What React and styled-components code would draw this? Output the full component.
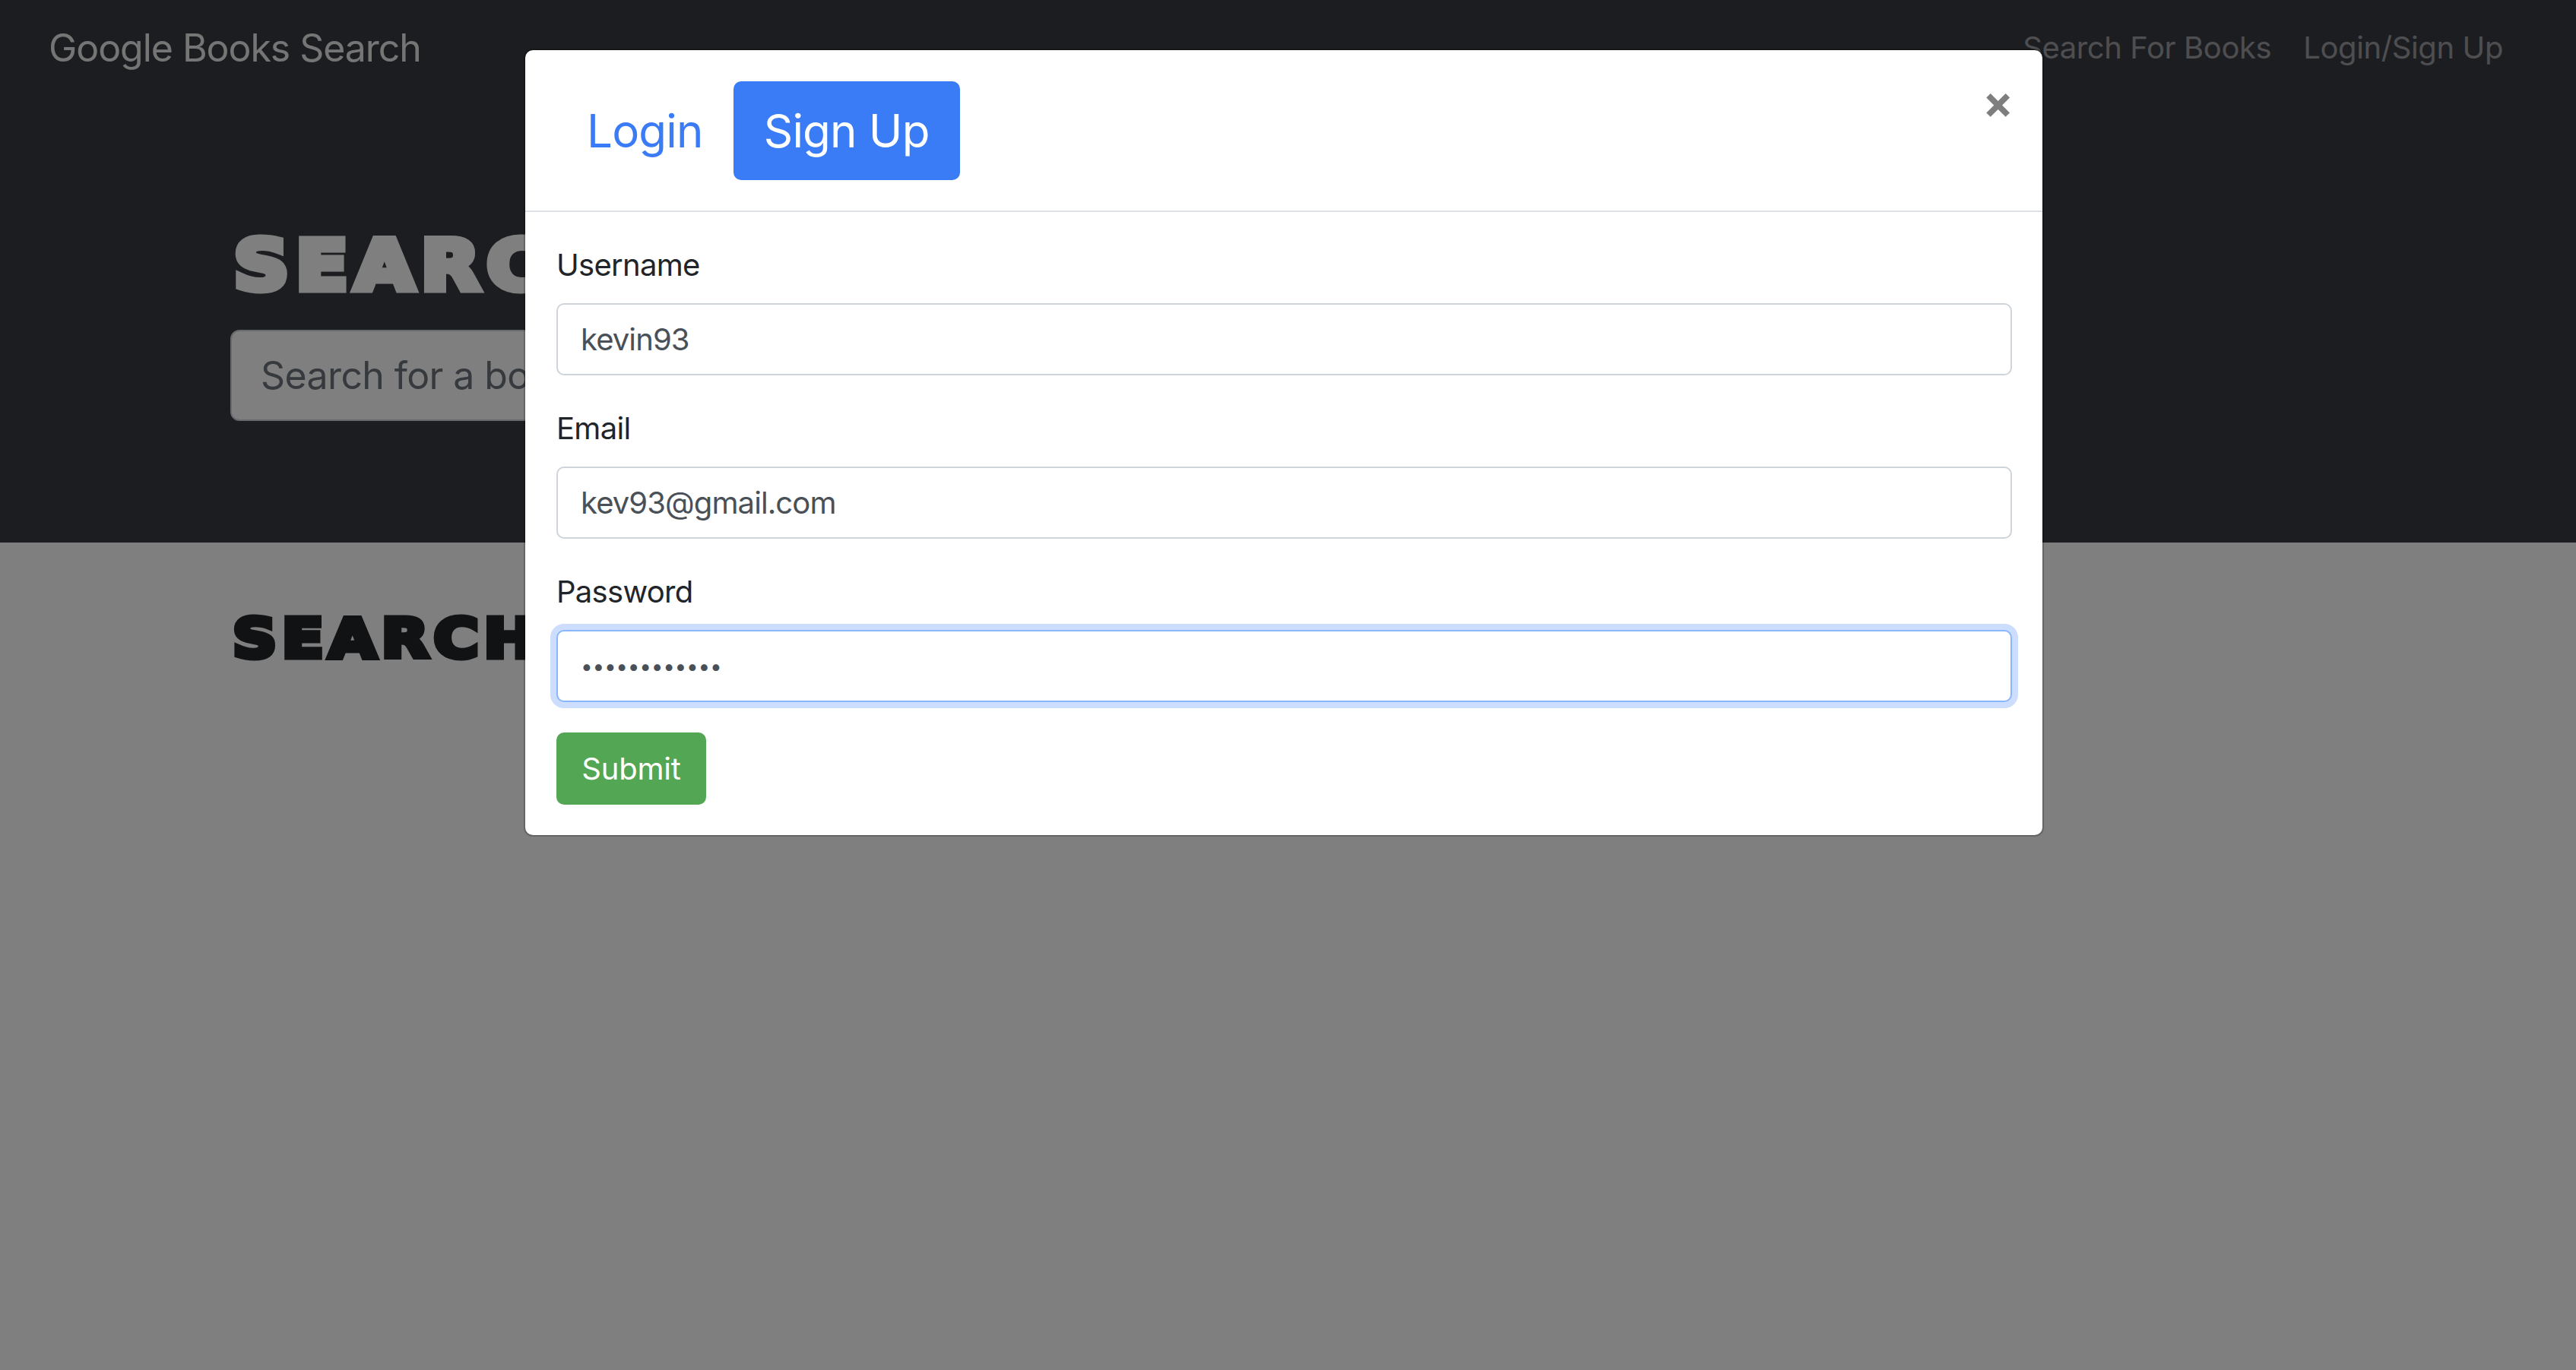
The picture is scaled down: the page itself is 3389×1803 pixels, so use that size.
import styled, { createGlobalStyle } from "styled-components";

const GlobalStyle = createGlobalStyle`
  * { box-sizing: border-box; }
  html, body { margin: 0; padding: 0; }
  body {
    background: #fff;
    color: #212529;
    font-family: Inter, "Noto Sans", sans-serif;
    font-size: 40px;
    line-height: 1.5;
  }
`;

function App() {
    return (
        <Page>
            <GlobalStyle />
            <Navbar>
                <Brand>Google Books Search</Brand>
                <NavLinks>
                    <NavLink>Search For Books</NavLink>
                    <NavLink>Login/Sign Up</NavLink>
                </NavLinks>
            </Navbar>

            <Jumbotron>
                <Container>
                    <HeroTitle>Search for Books!</HeroTitle>
                    <SearchInput placeholder="Search for a book" readOnly />
                </Container>
            </Jumbotron>

            <Results>
                <ResultsTitle>Search for a book to begin</ResultsTitle>
            </Results>

            <Backdrop />

            <Modal>
                <ModalHeader>
                    <Tabs>
                        <Tab>Login</Tab>
                        <Tab $active>Sign Up</Tab>
                    </Tabs>
                    <Close>×</Close>
                </ModalHeader>
                <ModalBody>
                    <FormGroup>
                        <Label>Username</Label>
                        <Input type="text" value="kevin93" readOnly />
                    </FormGroup>
                    <FormGroup>
                        <Label>Email</Label>
                        <Input type="text" value="kev93@gmail.com" readOnly />
                    </FormGroup>
                    <FormGroup>
                        <Label>Password</Label>
                        <Input type="password" value="kevinkevin93" readOnly $focused />
                    </FormGroup>
                    <Submit>Submit</Submit>
                </ModalBody>
            </Modal>
        </Page>
    );
}

const Page = styled.div`
  position: relative;
  min-height: 1803px;
  overflow: hidden;
`;

const Navbar = styled.nav`
  height: 126px;
  padding: 0 96px 0 64px;
  background: #393b41;
  display: flex;
  align-items: center;
  justify-content: space-between;
`;

const Brand = styled.a`
  font-size: 50px;
  letter-spacing: -1.05px;
  color: rgba(255, 255, 255, 0.9);
`;

const NavLinks = styled.div`
  display: flex;
  gap: 42px;
`;

const NavLink = styled.a`
  font-size: 40px;
  letter-spacing: -0.4px;
  color: rgba(255, 255, 255, 0.5);
`;

const Jumbotron = styled.section`
  height: 588px;
  padding-top: 164px;
  background: #393b41;
`;

const Container = styled.div`
  width: 1900px;
  margin-left: 303px;
`;

const HeroTitle = styled.h1`
  margin: 0 0 24px;
  padding-left: 4px;
  font-family: "DejaVu Sans", sans-serif;
  font-size: 90px;
  line-height: 120px;
  font-weight: 700;
  text-transform: uppercase;
  letter-spacing: 8px;
  -webkit-text-stroke: 9px #fff;
  color: #fff;
  transform: scaleX(1.12);
  transform-origin: left center;
`;

const SearchInput = styled.input`
  display: block;
  width: 100%;
  height: 120px;
  padding: 0 38px;
  border: 2px solid #ced4da;
  border-radius: 12px;
  background: #fff;
  font-family: inherit;
  font-size: 50px;
  letter-spacing: -0.6px;

  &::placeholder {
    color: #6c757d;
    opacity: 1;
  }
`;

const Results = styled.section`
  padding: 78px 0 0 306px;
`;

const ResultsTitle = styled.h2`
  margin: 0;
  font-family: "DejaVu Sans", sans-serif;
  font-size: 72px;
  line-height: 96px;
  font-weight: 700;
  text-transform: uppercase;
  letter-spacing: 6px;
  -webkit-text-stroke: 7px #212529;
  color: #212529;
  transform: scaleX(1.12);
  transform-origin: left center;
`;

const Backdrop = styled.div`
  position: absolute;
  inset: 0;
  background: rgba(0, 0, 0, 0.5);
`;

const Modal = styled.div`
  position: absolute;
  top: 64px;
  left: 689px;
  width: 2000px;
  background: #fff;
  background-clip: padding-box;
  border: 2px solid rgba(0, 0, 0, 0.2);
  border-radius: 12px;
`;

const ModalHeader = styled.header`
  position: relative;
  padding: 41px 40px 40px 41px;
  border-bottom: 2px solid #dee2e6;
`;

const Tabs = styled.div`
  display: flex;
`;

const Tab = styled.a`
  height: 130px;
  padding: 20px 40px;
  border-radius: 10px;
  font-size: 60px;
  line-height: 90px;
  letter-spacing: -0.8px;
  color: ${(p) => (p.$active ? "#fff" : "#3a7bf6")};
  background: ${(p) => (p.$active ? "#3a7bf6" : "transparent")};
`;

const Close = styled.span`
  position: absolute;
  top: 23px;
  right: 38px;
  font-size: 60px;
  line-height: 90px;
  font-weight: 700;
  color: #000;
  opacity: 0.5;
`;

const ModalBody = styled.div`
  padding: 40px 40px 40px 41px;
`;

const FormGroup = styled.div`
  margin-bottom: 40px;
`;

const Label = styled.label`
  display: block;
  height: 60px;
  margin-bottom: 20px;
  letter-spacing: -0.7px;
`;

const Input = styled.input`
  display: block;
  width: 100%;
  height: 95px;
  padding: 0 30px;
  border: 2px solid ${(p) => (p.$focused ? "#8ab7fb" : "#ced4da")};
  border-radius: 10px;
  outline: none;
  box-shadow: ${(p) => (p.$focused ? "0 0 0 8px #cdddfd" : "none")};
  background: #fff;
  color: #495057;
  font-family: inherit;
  font-size: ${(p) => (p.type === "password" ? "28px" : "40px")};
  letter-spacing: ${(p) => (p.type === "password" ? "-0.3px" : "-0.9px")};
`;

const Submit = styled.button`
  display: block;
  width: 197px;
  height: 95px;
  padding: 0;
  border: none;
  border-radius: 10px;
  background: #53a653;
  color: #fff;
  font-family: inherit;
  font-size: 40px;
  letter-spacing: -0.2px;
`;

export default App;
